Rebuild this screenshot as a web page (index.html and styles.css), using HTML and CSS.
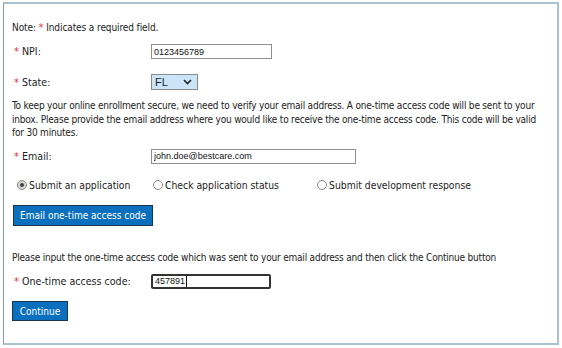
FILE: index.html
```html
<!DOCTYPE html>
<html lang="en">
<head>
    <meta charset="UTF-8">
    <title>Verify Email</title>
    <link rel="stylesheet" href="styles.css">
</head>
<body>

    <div class="panel">
        <p class="note">Note: <span class="req">*</span> Indicates a required field.</p>

        <div class="form-row row-npi">
            <label class="label"><span class="req">*</span> NPI:</label>
            <input class="text-input npi-input" type="text" value="0123456789">
        </div>

        <div class="form-row row-state">
            <label class="label"><span class="req">*</span> State:</label>
            <div class="select-box">
                <span>FL</span>
                <svg width="9" height="6" viewBox="0 0 9 6"><path d="M1 1 L4.5 4.5 L8 1" fill="none" stroke="#222" stroke-width="1.6"/></svg>
            </div>
        </div>

        <p class="info">To keep your online enrollment secure, we need to verify your email address. A one-time access code will be sent to your inbox. Please provide the email address where you would like to receive the one-time access code. This code will be valid for 30 minutes.</p>

        <div class="form-row row-email">
            <label class="label"><span class="req">*</span> Email:</label>
            <input class="text-input email-input" type="text" value="john.doe@bestcare.com">
        </div>

        <div class="radio-row">
            <label class="radio radio-1"><span class="dot checked"></span>Submit an application</label>
            <label class="radio radio-2"><span class="dot"></span>Check application status</label>
            <label class="radio"><span class="dot"></span>Submit development response</label>
        </div>

        <button class="btn btn-email">Email one-time access code</button>

        <p class="info info-code">Please input the one-time access code which was sent to your email address and then click the Continue button</p>

        <div class="form-row row-code">
            <label class="label"><span class="req">*</span> One-time access code:</label>
            <div class="text-input code-input">457891<span class="caret"></span></div>
        </div>

        <button class="btn btn-continue">Continue</button>
    </div>

</body>
</html>
```

FILE: styles.css
```css
* { box-sizing: border-box; margin: 0; padding: 0; }
body {
    background: #fff;
    font-family: "DejaVu Sans Condensed", "DejaVu Sans", sans-serif;
    font-size: 10px;
    color: #222;
    padding: 2px 3px 3px 3px;
}
.panel {
    height: 343px;
    border: 2px solid #a9c3d3;
    border-left: 1px solid #7f9db9;
    padding: 17px 10px 0 8px;
}
.note {
    line-height: 14px;
    letter-spacing: -0.1px;
}
.req {
    color: #e0323c;
    font-size: 11px;
}
.form-row {
    display: flex;
    align-items: center;
}
.label {
    width: 139px;
    padding-left: 2px;
    font-size: 10.6px;
}
.row-npi { margin-top: 9px; }
.row-state { margin-top: 15px; }
.row-email { margin-top: 9px; }
.row-code { margin-top: 10px; }
.text-input {
    height: 15px;
    border: 1px solid #8f8f8f;
    font-family: "Liberation Sans", Arial, sans-serif;
    font-size: 9px;
    padding: 0 2px;
    color: #111;
    background: #fff;
    outline: none;
}
.npi-input { width: 121px; }
.email-input { width: 205px; }
.code-input {
    width: 120px;
    border: 2px solid #333;
    border-radius: 2px;
    line-height: 11px;
    display: flex;
    align-items: center;
}
.caret {
    display: inline-block;
    width: 1px;
    height: 11px;
    background: #111;
    margin-left: 1px;
}
.select-box {
    width: 47px;
    height: 16px;
    border: 1px solid #8a8a8a;
    background: #cce4f7;
    display: flex;
    align-items: center;
    justify-content: space-between;
    padding: 0 5px 0 3px;
    font-family: "Liberation Sans", Arial, sans-serif;
    font-size: 11px;
}
.info {
    margin-top: 9px;
    line-height: 13.5px;
    letter-spacing: -0.2px;
}
.info-code { margin-top: 25px; }
.radio-row {
    display: flex;
    align-items: center;
    margin-top: 15px;
    font-size: 10.3px;
}
.radio {
    display: flex;
    align-items: center;
    gap: 2px;
    padding-left: 5px;
}
.radio-1 { width: 136px; }
.radio-2 { width: 164px; }
.dot {
    width: 10px;
    height: 10px;
    border: 1px solid #8a8a8a;
    border-radius: 50%;
    display: inline-block;
    position: relative;
}
.dot.checked {
    background: #d6d6d6;
}
.dot.checked::after {
    content: "";
    position: absolute;
    left: 2px; top: 2px;
    width: 4px; height: 4px;
    border-radius: 50%;
    background: #444;
}
.btn {
    display: block;
    background: #0a6fbd;
    color: #fff;
    border: 1px solid #1b3450;
    font-family: "DejaVu Sans Condensed", "DejaVu Sans", sans-serif;
    font-size: 10px;
    height: 21px;
    padding: 0 6px;
    white-space: nowrap;
}
.btn-email { margin-top: 14px; margin-left: 1px; width: 140px; }
.btn-continue { margin-top: 12px; width: 56px; height: 20px; }
```
